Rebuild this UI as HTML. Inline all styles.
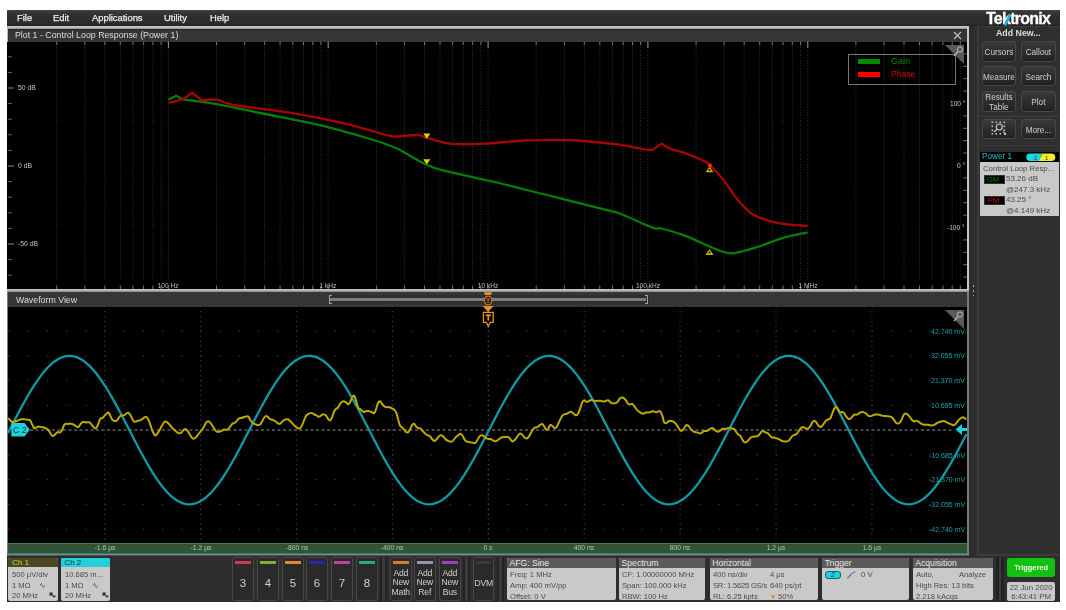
<!DOCTYPE html><html><head><meta charset="utf-8"><style>
*{margin:0;padding:0;box-sizing:border-box}
html,body{width:1066px;height:610px;overflow:hidden;background:#fff;font-family:"Liberation Sans", sans-serif}
.a{position:absolute}
.t{position:absolute;white-space:nowrap;line-height:1;will-change:transform}
.btn{position:absolute;border:1px solid #4a4642;border-radius:3px;background:linear-gradient(#3a3a3a,#2c2c2c 55%,#262626 85%,#1f1f1f);color:#cfcfcf;font-size:8.2px;text-align:center;display:flex;align-items:center;justify-content:center;line-height:1.17;padding-top:3.5px}
.cb{position:absolute;top:557px;width:22px;height:44px;border:1px solid #4a4642;border-radius:3px;background:#2a2a2a;color:#cfcfcf;text-align:center}
.cb i{position:absolute;left:2px;right:2px;top:3px;height:3px}
.badge{position:absolute;background:#c9c9c9;border-radius:2px;color:#4a4a4a;font-size:7.8px}
.bh{position:absolute;left:0;right:0;top:0;height:9px;background:#5a5a5a;color:#e0e0e0;font-size:8.4px;padding-left:2px;line-height:9px}
</style></head><body><div class="a" style="left:7px;top:10px;width:1053px;height:591.6px;background:#2e2e2e"></div><div class="a" style="left:7px;top:10px;width:1053px;height:16px;background:linear-gradient(#4a4a4a 0,#3a3a3a 1px,#2d2d2d 7px,#2b2b2b 14px,#222 16px)"></div><div class="t" style="left:17.4px;top:13px;font-size:9.4px;color:#ececec;-webkit-text-stroke:0.25px #ececec">File</div><div class="t" style="left:53.4px;top:13px;font-size:9.4px;color:#ececec;-webkit-text-stroke:0.25px #ececec">Edit</div><div class="t" style="left:91.7px;top:13px;font-size:9.4px;color:#ececec;-webkit-text-stroke:0.25px #ececec">Applications</div><div class="t" style="left:163.8px;top:13px;font-size:9.4px;color:#ececec;-webkit-text-stroke:0.25px #ececec">Utility</div><div class="t" style="left:210px;top:13px;font-size:9.4px;color:#ececec;-webkit-text-stroke:0.25px #ececec">Help</div><div class="a" style="left:7px;top:26px;width:962px;height:530px;background:#7a7a7a"></div><div class="a" style="left:7px;top:26px;width:962px;height:3px;background:linear-gradient(#d0d0d0,#9c9c9c)"></div><div class="a" style="left:8px;top:29px;width:959px;height:1px;background:#222"></div><div class="a" style="left:8px;top:30px;width:959px;height:11.6px;background:#363636"></div><div class="a" style="left:8px;top:41.6px;width:959px;height:247.4px;background:#000"></div><div class="t" style="left:15px;top:30.8px;font-size:8.8px;color:#dcdcdc">Plot 1 - Control Loop Response (Power 1)</div><svg class="a" style="left:953px;top:31px" width="9" height="9"><path d="M1 1 L8 8 M8 1 L1 8" stroke="#c4c4c4" stroke-width="1.1"/></svg><div class="a" style="left:967px;top:26px;width:2px;height:265px;background:#c6c6c6"></div><div class="a" style="left:7px;top:26px;width:1.3px;height:16px;background:#b8b8b8"></div><div class="a" style="left:7px;top:41.6px;width:1.3px;height:247.4px;background:#000"></div><div class="a" style="left:967px;top:291px;width:2px;height:264px;background:#7a7a7a"></div><div class="a" style="left:7px;top:291px;width:1px;height:264px;background:#7a7a7a"></div><div class="a" style="left:7px;top:289px;width:962px;height:3px;background:linear-gradient(#d0d0d0,#8a8a8a)"></div><div class="a" style="left:8px;top:292px;width:959px;height:14.5px;background:#363636"></div><div class="a" style="left:8px;top:306.5px;width:959px;height:236.5px;background:#000"></div><div class="a" style="left:8px;top:543px;width:959px;height:11px;background:linear-gradient(#384e2c,#30553a 50%,#2d5633);border-top:1px solid #2a8074;border-bottom:1px solid #2a7e7c"></div><div class="a" style="left:7px;top:554px;width:962px;height:2px;background:linear-gradient(#8e8484 50%,#525050 50%)"></div><div class="t" style="left:16px;top:295.8px;font-size:8.8px;color:#dcdcdc">Waveform View</div><div class="a" style="left:969px;top:26px;width:7px;height:530px;background:#2d2d2d"></div><div class="a" style="left:976.5px;top:26px;width:83.5px;height:529.5px;background:#2f2f2f;border-left:2.4px solid #3a3a3a;border-top:1px solid #3c3c3c;border-bottom:2px solid #3a3a3a"></div><div class="t" style="left:986px;top:11.2px;font-size:16px;font-weight:700;color:#fff;letter-spacing:-0.75px;-webkit-text-stroke:0.3px #fff">Tektronix</div><svg class="a" style="left:1001px;top:13.7px" width="12" height="12"><path d="M2.5 11.5 L5.6 11.5 L10.5 1 L7.4 1 Z" fill="#1ab4e0"/></svg><div class="t" style="left:995.5px;top:28.8px;font-size:8.8px;font-weight:700;color:#dcdcdc">Add New...</div><div class="btn" style="left:981.5px;top:41.0px;width:34.8px;height:20.6px">Cursors</div><div class="btn" style="left:1021px;top:41.0px;width:34.8px;height:20.6px">Callout</div><div class="btn" style="left:981.5px;top:65.5px;width:34.8px;height:20.6px">Measure</div><div class="btn" style="left:1021px;top:65.5px;width:34.8px;height:20.6px">Search</div><div class="btn" style="left:981.5px;top:91.0px;width:34.8px;height:20.6px">Results<br>Table</div><div class="btn" style="left:1021px;top:91.0px;width:34.8px;height:20.6px">Plot</div><div class="btn" style="left:981.5px;top:118.5px;width:34.8px;height:20.6px"></div><div class="btn" style="left:1021px;top:118.5px;width:34.8px;height:20.6px">More...</div><div class="a" style="left:979px;top:115.5px;width:80px;height:1px;background:#3e3e3e"></div><div class="a" style="left:979px;top:144.5px;width:80px;height:1px;background:#3e3e3e"></div><div class="a" style="left:979.5px;top:152px;width:79px;height:10px;background:#000"></div><div class="t" style="left:982px;top:153px;font-size:8.2px;color:#22c0d0">Power 1</div><svg class="a" style="left:1026px;top:152.5px" width="30" height="8.5"><path d="M4 0.5 H16.5 L12.5 8 H4 A3.75 3.75 0 0 1 4 0.5 Z" fill="#20d4e0"/><path d="M16.5 0.5 H25.5 A3.75 3.75 0 0 1 25.5 8 H12.5 Z" fill="#f0ec30"/><text x="8" y="7" font-size="6" fill="#0a4a50" font-family="Liberation Sans">2</text><text x="19" y="7" font-size="6" fill="#4a4a10" font-family="Liberation Sans">1</text></svg><div class="a" style="left:979.5px;top:162px;width:79px;height:54px;background:#c9c9c9"></div><div class="t" style="left:983px;top:165px;font-size:7.75px;color:#4a4a4a">Control Loop Resp...</div><div class="a" style="left:983.5px;top:175px;width:21px;height:9px;background:#000;border:1px solid #333"></div><div class="t" style="left:987px;top:175.5px;font-size:7.5px;color:#0a7a0a">GM</div><div class="t" style="left:1006px;top:175px;font-size:8px;color:#4a4a4a">53.26 dB</div><div class="t" style="left:1006px;top:185.5px;font-size:8px;color:#4a4a4a">@247.3 kHz</div><div class="a" style="left:983.5px;top:196px;width:21px;height:9px;background:#000;border:1px solid #333"></div><div class="t" style="left:988px;top:196.5px;font-size:7.5px;color:#d01010">PM</div><div class="t" style="left:1006px;top:196px;font-size:8px;color:#4a4a4a">43.25 °</div><div class="t" style="left:1006px;top:206.5px;font-size:8px;color:#4a4a4a">@4.149 kHz</div><svg class="a" style="left:0;top:0" width="1066" height="610" viewBox="0 0 1066 610"><line x1="56.7" y1="42" x2="56.7" y2="281" stroke="#313131" stroke-width="1" stroke-dasharray="1 1.6"/><line x1="56.7" y1="41.6" x2="56.7" y2="45" stroke="#707070" stroke-width="1"/><line x1="56.7" y1="285.5" x2="56.7" y2="289" stroke="#777" stroke-width="1"/><line x1="84.8" y1="42" x2="84.8" y2="281" stroke="#313131" stroke-width="1" stroke-dasharray="1 1.6"/><line x1="84.8" y1="41.6" x2="84.8" y2="45" stroke="#707070" stroke-width="1"/><line x1="84.8" y1="285.5" x2="84.8" y2="289" stroke="#777" stroke-width="1"/><line x1="104.8" y1="42" x2="104.8" y2="281" stroke="#313131" stroke-width="1" stroke-dasharray="1 1.6"/><line x1="104.8" y1="41.6" x2="104.8" y2="45" stroke="#707070" stroke-width="1"/><line x1="104.8" y1="285.5" x2="104.8" y2="289" stroke="#777" stroke-width="1"/><line x1="120.3" y1="42" x2="120.3" y2="281" stroke="#313131" stroke-width="1" stroke-dasharray="1 1.6"/><line x1="120.3" y1="41.6" x2="120.3" y2="45" stroke="#707070" stroke-width="1"/><line x1="120.3" y1="285.5" x2="120.3" y2="289" stroke="#777" stroke-width="1"/><line x1="132.9" y1="42" x2="132.9" y2="281" stroke="#313131" stroke-width="1" stroke-dasharray="1 1.6"/><line x1="132.9" y1="41.6" x2="132.9" y2="45" stroke="#707070" stroke-width="1"/><line x1="132.9" y1="285.5" x2="132.9" y2="289" stroke="#777" stroke-width="1"/><line x1="143.6" y1="42" x2="143.6" y2="281" stroke="#313131" stroke-width="1" stroke-dasharray="1 1.6"/><line x1="143.6" y1="41.6" x2="143.6" y2="45" stroke="#707070" stroke-width="1"/><line x1="143.6" y1="285.5" x2="143.6" y2="289" stroke="#777" stroke-width="1"/><line x1="152.9" y1="42" x2="152.9" y2="281" stroke="#313131" stroke-width="1" stroke-dasharray="1 1.6"/><line x1="152.9" y1="41.6" x2="152.9" y2="45" stroke="#707070" stroke-width="1"/><line x1="152.9" y1="285.5" x2="152.9" y2="289" stroke="#777" stroke-width="1"/><line x1="161.1" y1="42" x2="161.1" y2="281" stroke="#313131" stroke-width="1" stroke-dasharray="1 1.6"/><line x1="161.1" y1="41.6" x2="161.1" y2="45" stroke="#707070" stroke-width="1"/><line x1="161.1" y1="285.5" x2="161.1" y2="289" stroke="#777" stroke-width="1"/><line x1="168.4" y1="42" x2="168.4" y2="281" stroke="#313131" stroke-width="1" stroke-dasharray="1 1.6"/><line x1="168.4" y1="41.6" x2="168.4" y2="48" stroke="#999" stroke-width="1"/><line x1="168.4" y1="285.5" x2="168.4" y2="289" stroke="#777" stroke-width="1"/><line x1="216.5" y1="42" x2="216.5" y2="281" stroke="#313131" stroke-width="1" stroke-dasharray="1 1.6"/><line x1="216.5" y1="41.6" x2="216.5" y2="45" stroke="#707070" stroke-width="1"/><line x1="216.5" y1="285.5" x2="216.5" y2="289" stroke="#777" stroke-width="1"/><line x1="244.7" y1="42" x2="244.7" y2="281" stroke="#313131" stroke-width="1" stroke-dasharray="1 1.6"/><line x1="244.7" y1="41.6" x2="244.7" y2="45" stroke="#707070" stroke-width="1"/><line x1="244.7" y1="285.5" x2="244.7" y2="289" stroke="#777" stroke-width="1"/><line x1="264.6" y1="42" x2="264.6" y2="281" stroke="#313131" stroke-width="1" stroke-dasharray="1 1.6"/><line x1="264.6" y1="41.6" x2="264.6" y2="45" stroke="#707070" stroke-width="1"/><line x1="264.6" y1="285.5" x2="264.6" y2="289" stroke="#777" stroke-width="1"/><line x1="280.1" y1="42" x2="280.1" y2="281" stroke="#313131" stroke-width="1" stroke-dasharray="1 1.6"/><line x1="280.1" y1="41.6" x2="280.1" y2="45" stroke="#707070" stroke-width="1"/><line x1="280.1" y1="285.5" x2="280.1" y2="289" stroke="#777" stroke-width="1"/><line x1="292.8" y1="42" x2="292.8" y2="281" stroke="#313131" stroke-width="1" stroke-dasharray="1 1.6"/><line x1="292.8" y1="41.6" x2="292.8" y2="45" stroke="#707070" stroke-width="1"/><line x1="292.8" y1="285.5" x2="292.8" y2="289" stroke="#777" stroke-width="1"/><line x1="303.5" y1="42" x2="303.5" y2="281" stroke="#313131" stroke-width="1" stroke-dasharray="1 1.6"/><line x1="303.5" y1="41.6" x2="303.5" y2="45" stroke="#707070" stroke-width="1"/><line x1="303.5" y1="285.5" x2="303.5" y2="289" stroke="#777" stroke-width="1"/><line x1="312.8" y1="42" x2="312.8" y2="281" stroke="#313131" stroke-width="1" stroke-dasharray="1 1.6"/><line x1="312.8" y1="41.6" x2="312.8" y2="45" stroke="#707070" stroke-width="1"/><line x1="312.8" y1="285.5" x2="312.8" y2="289" stroke="#777" stroke-width="1"/><line x1="320.9" y1="42" x2="320.9" y2="281" stroke="#313131" stroke-width="1" stroke-dasharray="1 1.6"/><line x1="320.9" y1="41.6" x2="320.9" y2="45" stroke="#707070" stroke-width="1"/><line x1="320.9" y1="285.5" x2="320.9" y2="289" stroke="#777" stroke-width="1"/><line x1="328.2" y1="42" x2="328.2" y2="281" stroke="#313131" stroke-width="1" stroke-dasharray="1 1.6"/><line x1="328.2" y1="41.6" x2="328.2" y2="48" stroke="#999" stroke-width="1"/><line x1="328.2" y1="285.5" x2="328.2" y2="289" stroke="#777" stroke-width="1"/><line x1="376.4" y1="42" x2="376.4" y2="281" stroke="#313131" stroke-width="1" stroke-dasharray="1 1.6"/><line x1="376.4" y1="41.6" x2="376.4" y2="45" stroke="#707070" stroke-width="1"/><line x1="376.4" y1="285.5" x2="376.4" y2="289" stroke="#777" stroke-width="1"/><line x1="404.5" y1="42" x2="404.5" y2="281" stroke="#313131" stroke-width="1" stroke-dasharray="1 1.6"/><line x1="404.5" y1="41.6" x2="404.5" y2="45" stroke="#707070" stroke-width="1"/><line x1="404.5" y1="285.5" x2="404.5" y2="289" stroke="#777" stroke-width="1"/><line x1="424.5" y1="42" x2="424.5" y2="281" stroke="#313131" stroke-width="1" stroke-dasharray="1 1.6"/><line x1="424.5" y1="41.6" x2="424.5" y2="45" stroke="#707070" stroke-width="1"/><line x1="424.5" y1="285.5" x2="424.5" y2="289" stroke="#777" stroke-width="1"/><line x1="440.0" y1="42" x2="440.0" y2="281" stroke="#313131" stroke-width="1" stroke-dasharray="1 1.6"/><line x1="440.0" y1="41.6" x2="440.0" y2="45" stroke="#707070" stroke-width="1"/><line x1="440.0" y1="285.5" x2="440.0" y2="289" stroke="#777" stroke-width="1"/><line x1="452.6" y1="42" x2="452.6" y2="281" stroke="#313131" stroke-width="1" stroke-dasharray="1 1.6"/><line x1="452.6" y1="41.6" x2="452.6" y2="45" stroke="#707070" stroke-width="1"/><line x1="452.6" y1="285.5" x2="452.6" y2="289" stroke="#777" stroke-width="1"/><line x1="463.3" y1="42" x2="463.3" y2="281" stroke="#313131" stroke-width="1" stroke-dasharray="1 1.6"/><line x1="463.3" y1="41.6" x2="463.3" y2="45" stroke="#707070" stroke-width="1"/><line x1="463.3" y1="285.5" x2="463.3" y2="289" stroke="#777" stroke-width="1"/><line x1="472.6" y1="42" x2="472.6" y2="281" stroke="#313131" stroke-width="1" stroke-dasharray="1 1.6"/><line x1="472.6" y1="41.6" x2="472.6" y2="45" stroke="#707070" stroke-width="1"/><line x1="472.6" y1="285.5" x2="472.6" y2="289" stroke="#777" stroke-width="1"/><line x1="480.8" y1="42" x2="480.8" y2="281" stroke="#313131" stroke-width="1" stroke-dasharray="1 1.6"/><line x1="480.8" y1="41.6" x2="480.8" y2="45" stroke="#707070" stroke-width="1"/><line x1="480.8" y1="285.5" x2="480.8" y2="289" stroke="#777" stroke-width="1"/><line x1="488.1" y1="42" x2="488.1" y2="281" stroke="#313131" stroke-width="1" stroke-dasharray="1 1.6"/><line x1="488.1" y1="41.6" x2="488.1" y2="48" stroke="#999" stroke-width="1"/><line x1="488.1" y1="285.5" x2="488.1" y2="289" stroke="#777" stroke-width="1"/><line x1="536.2" y1="42" x2="536.2" y2="281" stroke="#313131" stroke-width="1" stroke-dasharray="1 1.6"/><line x1="536.2" y1="41.6" x2="536.2" y2="45" stroke="#707070" stroke-width="1"/><line x1="536.2" y1="285.5" x2="536.2" y2="289" stroke="#777" stroke-width="1"/><line x1="564.4" y1="42" x2="564.4" y2="281" stroke="#313131" stroke-width="1" stroke-dasharray="1 1.6"/><line x1="564.4" y1="41.6" x2="564.4" y2="45" stroke="#707070" stroke-width="1"/><line x1="564.4" y1="285.5" x2="564.4" y2="289" stroke="#777" stroke-width="1"/><line x1="584.3" y1="42" x2="584.3" y2="281" stroke="#313131" stroke-width="1" stroke-dasharray="1 1.6"/><line x1="584.3" y1="41.6" x2="584.3" y2="45" stroke="#707070" stroke-width="1"/><line x1="584.3" y1="285.5" x2="584.3" y2="289" stroke="#777" stroke-width="1"/><line x1="599.8" y1="42" x2="599.8" y2="281" stroke="#313131" stroke-width="1" stroke-dasharray="1 1.6"/><line x1="599.8" y1="41.6" x2="599.8" y2="45" stroke="#707070" stroke-width="1"/><line x1="599.8" y1="285.5" x2="599.8" y2="289" stroke="#777" stroke-width="1"/><line x1="612.5" y1="42" x2="612.5" y2="281" stroke="#313131" stroke-width="1" stroke-dasharray="1 1.6"/><line x1="612.5" y1="41.6" x2="612.5" y2="45" stroke="#707070" stroke-width="1"/><line x1="612.5" y1="285.5" x2="612.5" y2="289" stroke="#777" stroke-width="1"/><line x1="623.2" y1="42" x2="623.2" y2="281" stroke="#313131" stroke-width="1" stroke-dasharray="1 1.6"/><line x1="623.2" y1="41.6" x2="623.2" y2="45" stroke="#707070" stroke-width="1"/><line x1="623.2" y1="285.5" x2="623.2" y2="289" stroke="#777" stroke-width="1"/><line x1="632.5" y1="42" x2="632.5" y2="281" stroke="#313131" stroke-width="1" stroke-dasharray="1 1.6"/><line x1="632.5" y1="41.6" x2="632.5" y2="45" stroke="#707070" stroke-width="1"/><line x1="632.5" y1="285.5" x2="632.5" y2="289" stroke="#777" stroke-width="1"/><line x1="640.6" y1="42" x2="640.6" y2="281" stroke="#313131" stroke-width="1" stroke-dasharray="1 1.6"/><line x1="640.6" y1="41.6" x2="640.6" y2="45" stroke="#707070" stroke-width="1"/><line x1="640.6" y1="285.5" x2="640.6" y2="289" stroke="#777" stroke-width="1"/><line x1="647.9" y1="42" x2="647.9" y2="281" stroke="#313131" stroke-width="1" stroke-dasharray="1 1.6"/><line x1="647.9" y1="41.6" x2="647.9" y2="48" stroke="#999" stroke-width="1"/><line x1="647.9" y1="285.5" x2="647.9" y2="289" stroke="#777" stroke-width="1"/><line x1="696.1" y1="42" x2="696.1" y2="281" stroke="#313131" stroke-width="1" stroke-dasharray="1 1.6"/><line x1="696.1" y1="41.6" x2="696.1" y2="45" stroke="#707070" stroke-width="1"/><line x1="696.1" y1="285.5" x2="696.1" y2="289" stroke="#777" stroke-width="1"/><line x1="724.2" y1="42" x2="724.2" y2="281" stroke="#313131" stroke-width="1" stroke-dasharray="1 1.6"/><line x1="724.2" y1="41.6" x2="724.2" y2="45" stroke="#707070" stroke-width="1"/><line x1="724.2" y1="285.5" x2="724.2" y2="289" stroke="#777" stroke-width="1"/><line x1="744.2" y1="42" x2="744.2" y2="281" stroke="#313131" stroke-width="1" stroke-dasharray="1 1.6"/><line x1="744.2" y1="41.6" x2="744.2" y2="45" stroke="#707070" stroke-width="1"/><line x1="744.2" y1="285.5" x2="744.2" y2="289" stroke="#777" stroke-width="1"/><line x1="759.7" y1="42" x2="759.7" y2="281" stroke="#313131" stroke-width="1" stroke-dasharray="1 1.6"/><line x1="759.7" y1="41.6" x2="759.7" y2="45" stroke="#707070" stroke-width="1"/><line x1="759.7" y1="285.5" x2="759.7" y2="289" stroke="#777" stroke-width="1"/><line x1="772.3" y1="42" x2="772.3" y2="281" stroke="#313131" stroke-width="1" stroke-dasharray="1 1.6"/><line x1="772.3" y1="41.6" x2="772.3" y2="45" stroke="#707070" stroke-width="1"/><line x1="772.3" y1="285.5" x2="772.3" y2="289" stroke="#777" stroke-width="1"/><line x1="783.0" y1="42" x2="783.0" y2="281" stroke="#313131" stroke-width="1" stroke-dasharray="1 1.6"/><line x1="783.0" y1="41.6" x2="783.0" y2="45" stroke="#707070" stroke-width="1"/><line x1="783.0" y1="285.5" x2="783.0" y2="289" stroke="#777" stroke-width="1"/><line x1="792.3" y1="42" x2="792.3" y2="281" stroke="#313131" stroke-width="1" stroke-dasharray="1 1.6"/><line x1="792.3" y1="41.6" x2="792.3" y2="45" stroke="#707070" stroke-width="1"/><line x1="792.3" y1="285.5" x2="792.3" y2="289" stroke="#777" stroke-width="1"/><line x1="800.5" y1="42" x2="800.5" y2="281" stroke="#313131" stroke-width="1" stroke-dasharray="1 1.6"/><line x1="800.5" y1="41.6" x2="800.5" y2="45" stroke="#707070" stroke-width="1"/><line x1="800.5" y1="285.5" x2="800.5" y2="289" stroke="#777" stroke-width="1"/><line x1="807.8" y1="42" x2="807.8" y2="281" stroke="#313131" stroke-width="1" stroke-dasharray="1 1.6"/><line x1="807.8" y1="41.6" x2="807.8" y2="48" stroke="#999" stroke-width="1"/><line x1="807.8" y1="285.5" x2="807.8" y2="289" stroke="#777" stroke-width="1"/><line x1="855.9" y1="42" x2="855.9" y2="281" stroke="#313131" stroke-width="1" stroke-dasharray="1 1.6"/><line x1="855.9" y1="41.6" x2="855.9" y2="45" stroke="#707070" stroke-width="1"/><line x1="855.9" y1="285.5" x2="855.9" y2="289" stroke="#777" stroke-width="1"/><line x1="884.1" y1="42" x2="884.1" y2="281" stroke="#313131" stroke-width="1" stroke-dasharray="1 1.6"/><line x1="884.1" y1="41.6" x2="884.1" y2="45" stroke="#707070" stroke-width="1"/><line x1="884.1" y1="285.5" x2="884.1" y2="289" stroke="#777" stroke-width="1"/><line x1="904.0" y1="42" x2="904.0" y2="281" stroke="#313131" stroke-width="1" stroke-dasharray="1 1.6"/><line x1="904.0" y1="41.6" x2="904.0" y2="45" stroke="#707070" stroke-width="1"/><line x1="904.0" y1="285.5" x2="904.0" y2="289" stroke="#777" stroke-width="1"/><line x1="919.5" y1="42" x2="919.5" y2="281" stroke="#313131" stroke-width="1" stroke-dasharray="1 1.6"/><line x1="919.5" y1="41.6" x2="919.5" y2="45" stroke="#707070" stroke-width="1"/><line x1="919.5" y1="285.5" x2="919.5" y2="289" stroke="#777" stroke-width="1"/><line x1="932.2" y1="42" x2="932.2" y2="281" stroke="#313131" stroke-width="1" stroke-dasharray="1 1.6"/><line x1="932.2" y1="41.6" x2="932.2" y2="45" stroke="#707070" stroke-width="1"/><line x1="932.2" y1="285.5" x2="932.2" y2="289" stroke="#777" stroke-width="1"/><line x1="942.9" y1="42" x2="942.9" y2="281" stroke="#313131" stroke-width="1" stroke-dasharray="1 1.6"/><line x1="942.9" y1="41.6" x2="942.9" y2="45" stroke="#707070" stroke-width="1"/><line x1="942.9" y1="285.5" x2="942.9" y2="289" stroke="#777" stroke-width="1"/><line x1="952.2" y1="42" x2="952.2" y2="281" stroke="#313131" stroke-width="1" stroke-dasharray="1 1.6"/><line x1="952.2" y1="41.6" x2="952.2" y2="45" stroke="#707070" stroke-width="1"/><line x1="952.2" y1="285.5" x2="952.2" y2="289" stroke="#777" stroke-width="1"/><line x1="960.3" y1="42" x2="960.3" y2="281" stroke="#313131" stroke-width="1" stroke-dasharray="1 1.6"/><line x1="960.3" y1="41.6" x2="960.3" y2="45" stroke="#707070" stroke-width="1"/><line x1="960.3" y1="285.5" x2="960.3" y2="289" stroke="#777" stroke-width="1"/><line x1="8" y1="56.8" x2="12" y2="56.8" stroke="#666" stroke-width="1"/><line x1="8" y1="72.4" x2="12" y2="72.4" stroke="#666" stroke-width="1"/><line x1="8" y1="88.0" x2="14" y2="88.0" stroke="#888" stroke-width="1"/><line x1="8" y1="103.6" x2="12" y2="103.6" stroke="#666" stroke-width="1"/><line x1="8" y1="119.2" x2="12" y2="119.2" stroke="#666" stroke-width="1"/><line x1="8" y1="134.8" x2="12" y2="134.8" stroke="#666" stroke-width="1"/><line x1="8" y1="150.4" x2="12" y2="150.4" stroke="#666" stroke-width="1"/><line x1="8" y1="166.0" x2="14" y2="166.0" stroke="#888" stroke-width="1"/><line x1="8" y1="181.6" x2="12" y2="181.6" stroke="#666" stroke-width="1"/><line x1="8" y1="197.2" x2="12" y2="197.2" stroke="#666" stroke-width="1"/><line x1="8" y1="212.8" x2="12" y2="212.8" stroke="#666" stroke-width="1"/><line x1="8" y1="228.4" x2="12" y2="228.4" stroke="#666" stroke-width="1"/><line x1="8" y1="244.0" x2="14" y2="244.0" stroke="#888" stroke-width="1"/><line x1="8" y1="259.6" x2="12" y2="259.6" stroke="#666" stroke-width="1"/><line x1="8" y1="275.2" x2="12" y2="275.2" stroke="#666" stroke-width="1"/><line x1="963" y1="53.9" x2="967" y2="53.9" stroke="#666" stroke-width="1"/><line x1="963" y1="66.3" x2="967" y2="66.3" stroke="#666" stroke-width="1"/><line x1="963" y1="78.7" x2="967" y2="78.7" stroke="#666" stroke-width="1"/><line x1="963" y1="91.1" x2="967" y2="91.1" stroke="#666" stroke-width="1"/><line x1="963" y1="115.9" x2="967" y2="115.9" stroke="#666" stroke-width="1"/><line x1="963" y1="128.3" x2="967" y2="128.3" stroke="#666" stroke-width="1"/><line x1="963" y1="140.7" x2="967" y2="140.7" stroke="#666" stroke-width="1"/><line x1="963" y1="153.1" x2="967" y2="153.1" stroke="#666" stroke-width="1"/><line x1="963" y1="177.9" x2="967" y2="177.9" stroke="#666" stroke-width="1"/><line x1="963" y1="190.3" x2="967" y2="190.3" stroke="#666" stroke-width="1"/><line x1="963" y1="202.7" x2="967" y2="202.7" stroke="#666" stroke-width="1"/><line x1="963" y1="215.1" x2="967" y2="215.1" stroke="#666" stroke-width="1"/><line x1="963" y1="239.9" x2="967" y2="239.9" stroke="#666" stroke-width="1"/><line x1="963" y1="252.3" x2="967" y2="252.3" stroke="#666" stroke-width="1"/><line x1="963" y1="264.7" x2="967" y2="264.7" stroke="#666" stroke-width="1"/><line x1="963" y1="277.1" x2="967" y2="277.1" stroke="#666" stroke-width="1"/><path d="M168.4,99.7 C168.4,99.7 176.3,95.8 176.3,95.8 C176.3,95.8 183.6,99.7 183.6,99.7 C183.6,99.7 202.9,101.8 216.5,104.2 C230.1,106.6 248.2,110.6 265.0,114.0 C281.9,117.4 300.1,120.5 317.6,124.7 C335.1,128.9 356.9,135.1 370.0,139.0 C383.1,142.9 387.1,144.1 396.4,148.3 C405.7,152.6 417.5,160.7 425.8,164.5 C434.1,168.3 434.1,168.1 446.3,171.2 C458.5,174.3 481.3,178.8 498.8,183.0 C516.3,187.2 533.8,191.8 551.3,196.2 C568.8,200.6 592.3,206.3 603.9,209.3 C615.5,212.3 612.9,210.9 621.0,214.0 C629.1,217.1 645.7,225.3 652.5,227.7 C659.3,230.1 656.0,227.1 661.7,228.5 C667.4,229.9 678.6,233.3 686.7,236.4 C694.8,239.5 703.8,244.2 710.3,246.9 C716.8,249.6 721.6,251.7 726.0,252.7 C730.4,253.7 731.3,253.7 736.6,252.7 C741.9,251.7 749.7,249.4 757.6,246.9 C765.5,244.4 775.6,240.1 783.9,237.7 C792.2,235.3 803.6,233.3 807.5,232.4" fill="none" stroke="#067e06" stroke-width="2.3" stroke-linejoin="round"/><path d="M168.4,103.0 C170.9,102.3 183.6,99.0 183.6,99.0 C183.6,99.0 192.0,92.6 192.0,92.6 C192.0,92.6 202.0,100.5 202.0,100.5 C202.0,100.5 211.2,99.0 216.5,99.7 C221.8,100.5 221.1,102.8 233.5,105.0 C245.9,107.2 272.6,109.8 291.0,112.8 C309.4,115.8 328.2,119.6 344.0,123.3 C359.8,127.0 377.3,132.8 386.0,135.0 C394.7,137.2 391.2,136.5 396.4,136.5 C401.6,136.5 412.4,134.8 417.4,135.0 C422.4,135.2 421.8,136.6 426.6,137.9 C431.4,139.2 440.8,142.1 446.3,143.1 C451.8,144.1 452.8,144.1 459.4,144.2 C466.0,144.3 474.8,144.2 485.7,143.6 C496.6,143.0 511.9,141.1 525.0,140.5 C538.1,139.9 555.7,140.2 564.5,140.2 C573.3,140.2 568.9,139.8 577.6,140.5 C586.4,141.2 605.4,142.9 617.0,144.4 C628.6,145.9 641.2,148.9 647.3,149.7 C653.4,150.4 653.8,148.9 653.8,148.9 C653.8,148.9 661.7,143.7 661.7,143.7 C661.7,143.7 666.8,147.2 671.0,148.9 C675.2,150.6 681.0,151.5 686.7,153.6 C692.4,155.7 701.1,159.5 705.0,161.5 C708.9,163.5 707.2,162.4 710.3,165.5 C713.4,168.6 719.1,174.5 723.5,180.0 C727.9,185.5 731.8,192.6 736.6,198.3 C741.4,204.0 746.6,210.2 752.3,214.0 C758.0,217.8 764.6,219.6 770.7,221.4 C776.8,223.2 782.9,223.8 789.0,224.6 C795.1,225.3 804.4,225.7 807.5,225.9" fill="none" stroke="#a60505" stroke-width="2.3" stroke-linejoin="round"/><path d="M423.3 133.5 H430.3 L426.8 138.8 Z" fill="#e8d400"/><path d="M423.3 159.2 H430.3 L426.8 164.5 Z" fill="#e8d400"/><circle cx="710" cy="165.5" r="2" fill="#ff3010"/><path d="M709.5 166.8 L713.5 172.3 H705.5 Z" fill="#c8b400"/><circle cx="709.5" cy="170" r="1" fill="#000"/><path d="M709.5 249 L713.5 255 H705.5 Z" fill="#c8b400"/><circle cx="709.5" cy="252.5" r="1" fill="#000"/><line x1="104.7" y1="306" x2="104.7" y2="543" stroke="#3a3a3a" stroke-width="1.2" stroke-dasharray="1.2 3.74"/><line x1="200.6" y1="306" x2="200.6" y2="543" stroke="#3a3a3a" stroke-width="1.2" stroke-dasharray="1.2 3.74"/><line x1="296.5" y1="306" x2="296.5" y2="543" stroke="#3a3a3a" stroke-width="1.2" stroke-dasharray="1.2 3.74"/><line x1="392.4" y1="306" x2="392.4" y2="543" stroke="#3a3a3a" stroke-width="1.2" stroke-dasharray="1.2 3.74"/><line x1="488.3" y1="306" x2="488.3" y2="543" stroke="#5a5a5a" stroke-width="1.2" stroke-dasharray="1.2 3.74"/><line x1="584.2" y1="306" x2="584.2" y2="543" stroke="#3a3a3a" stroke-width="1.2" stroke-dasharray="1.2 3.74"/><line x1="680.1" y1="306" x2="680.1" y2="543" stroke="#3a3a3a" stroke-width="1.2" stroke-dasharray="1.2 3.74"/><line x1="776.0" y1="306" x2="776.0" y2="543" stroke="#3a3a3a" stroke-width="1.2" stroke-dasharray="1.2 3.74"/><line x1="871.9" y1="306" x2="871.9" y2="543" stroke="#3a3a3a" stroke-width="1.2" stroke-dasharray="1.2 3.74"/><line x1="8" y1="306.1" x2="967" y2="306.1" stroke="#3c3c3c" stroke-width="1.2" stroke-dasharray="1.2 17.98" stroke-dashoffset="-0.6"/><line x1="8" y1="330.9" x2="967" y2="330.9" stroke="#3c3c3c" stroke-width="1.2" stroke-dasharray="1.2 17.98" stroke-dashoffset="-0.6"/><line x1="8" y1="355.7" x2="967" y2="355.7" stroke="#3c3c3c" stroke-width="1.2" stroke-dasharray="1.2 17.98" stroke-dashoffset="-0.6"/><line x1="8" y1="380.5" x2="967" y2="380.5" stroke="#3c3c3c" stroke-width="1.2" stroke-dasharray="1.2 17.98" stroke-dashoffset="-0.6"/><line x1="8" y1="405.3" x2="967" y2="405.3" stroke="#3c3c3c" stroke-width="1.2" stroke-dasharray="1.2 17.98" stroke-dashoffset="-0.6"/><line x1="8" y1="454.9" x2="967" y2="454.9" stroke="#3c3c3c" stroke-width="1.2" stroke-dasharray="1.2 17.98" stroke-dashoffset="-0.6"/><line x1="8" y1="479.7" x2="967" y2="479.7" stroke="#3c3c3c" stroke-width="1.2" stroke-dasharray="1.2 17.98" stroke-dashoffset="-0.6"/><line x1="8" y1="504.5" x2="967" y2="504.5" stroke="#3c3c3c" stroke-width="1.2" stroke-dasharray="1.2 17.98" stroke-dashoffset="-0.6"/><line x1="8" y1="529.3" x2="967" y2="529.3" stroke="#3c3c3c" stroke-width="1.2" stroke-dasharray="1.2 17.98" stroke-dashoffset="-0.6"/><line x1="30" y1="430.1" x2="953" y2="430.1" stroke="#474747" stroke-width="2" stroke-dasharray="3 2.5"/><polyline points="8.0,433.0 9.5,430.1 11.0,427.2 12.5,424.3 14.0,421.4 15.5,418.5 17.0,415.6 18.5,412.8 20.0,409.9 21.5,407.1 23.0,404.4 24.5,401.7 26.0,399.0 27.5,396.4 29.0,393.8 30.5,391.3 32.0,388.8 33.5,386.4 35.0,384.1 36.5,381.9 38.0,379.7 39.5,377.6 41.0,375.6 42.5,373.6 44.0,371.8 45.5,370.0 47.0,368.4 48.5,366.8 50.0,365.3 51.5,363.9 53.0,362.7 54.5,361.5 56.0,360.5 57.5,359.5 59.0,358.7 60.5,357.9 62.0,357.3 63.5,356.8 65.0,356.4 66.5,356.1 68.0,356.0 69.5,355.9 71.0,356.0 72.5,356.1 74.0,356.4 75.5,356.8 77.0,357.4 78.5,358.0 80.0,358.7 81.5,359.6 83.0,360.5 84.5,361.6 86.0,362.8 87.5,364.1 89.0,365.4 90.5,366.9 92.0,368.5 93.5,370.2 95.0,371.9 96.5,373.8 98.0,375.7 99.5,377.8 101.0,379.9 102.5,382.1 104.0,384.3 105.5,386.6 107.0,389.0 108.5,391.5 110.0,394.0 111.5,396.6 113.0,399.2 114.5,401.9 116.0,404.6 117.5,407.4 119.0,410.2 120.5,413.0 122.0,415.8 123.5,418.7 125.0,421.6 126.5,424.5 128.0,427.4 129.5,430.3 131.0,433.3 132.5,436.2 134.0,439.1 135.5,442.0 137.0,444.8 138.5,447.7 140.0,450.5 141.5,453.3 143.0,456.0 144.5,458.7 146.0,461.4 147.5,464.0 149.0,466.6 150.5,469.1 152.0,471.6 153.5,473.9 155.0,476.3 156.5,478.5 158.0,480.7 159.5,482.8 161.0,484.8 162.5,486.7 164.0,488.6 165.5,490.3 167.0,492.0 168.5,493.5 170.0,495.0 171.5,496.4 173.0,497.6 174.5,498.8 176.0,499.8 177.5,500.8 179.0,501.6 180.5,502.3 182.0,502.9 183.5,503.4 185.0,503.8 186.5,504.1 188.0,504.3 189.5,504.3 191.0,504.2 192.5,504.0 194.0,503.7 195.5,503.3 197.0,502.8 198.5,502.2 200.0,501.4 201.5,500.5 203.0,499.6 204.5,498.5 206.0,497.3 207.5,496.0 209.0,494.6 210.5,493.2 212.0,491.6 213.5,489.9 215.0,488.1 216.5,486.2 218.0,484.3 219.5,482.3 221.0,480.2 222.5,478.0 224.0,475.7 225.5,473.4 227.0,471.0 228.5,468.5 230.0,466.0 231.5,463.4 233.0,460.8 234.5,458.1 236.0,455.4 237.5,452.6 239.0,449.8 240.5,447.0 242.0,444.1 243.5,441.2 245.0,438.3 246.5,435.4 248.0,432.5 249.5,429.6 251.0,426.7 252.5,423.8 254.0,420.9 255.5,418.0 257.0,415.1 258.5,412.3 260.0,409.5 261.5,406.7 263.0,403.9 264.5,401.2 266.0,398.6 267.5,395.9 269.0,393.4 270.5,390.9 272.0,388.4 273.5,386.1 275.0,383.7 276.5,381.5 278.0,379.3 279.5,377.2 281.0,375.2 282.5,373.3 284.0,371.5 285.5,369.7 287.0,368.1 288.5,366.5 290.0,365.1 291.5,363.7 293.0,362.5 294.5,361.3 296.0,360.3 297.5,359.4 299.0,358.5 300.5,357.8 302.0,357.2 303.5,356.7 305.0,356.3 306.5,356.1 308.0,355.9 309.5,355.9 311.0,356.0 312.5,356.2 314.0,356.5 315.5,356.9 317.0,357.4 318.5,358.1 320.0,358.9 321.5,359.7 323.0,360.7 324.5,361.8 326.0,363.0 327.5,364.3 329.0,365.7 330.5,367.2 332.0,368.8 333.5,370.5 335.0,372.2 336.5,374.1 338.0,376.1 339.5,378.1 341.0,380.2 342.5,382.4 344.0,384.7 345.5,387.0 347.0,389.4 348.5,391.9 350.0,394.4 351.5,397.0 353.0,399.7 354.5,402.4 356.0,405.1 357.5,407.8 359.0,410.6 360.5,413.5 362.0,416.3 363.5,419.2 365.0,422.1 366.5,425.0 368.0,427.9 369.5,430.8 371.0,433.7 372.5,436.7 374.0,439.6 375.5,442.4 377.0,445.3 378.5,448.1 380.0,451.0 381.5,453.7 383.0,456.5 384.5,459.2 386.0,461.9 387.5,464.5 389.0,467.0 390.5,469.5 392.0,472.0 393.5,474.3 395.0,476.6 396.5,478.9 398.0,481.0 399.5,483.1 401.0,485.1 402.5,487.0 404.0,488.9 405.5,490.6 407.0,492.2 408.5,493.8 410.0,495.2 411.5,496.6 413.0,497.8 414.5,499.0 416.0,500.0 417.5,500.9 419.0,501.7 420.5,502.4 422.0,503.0 423.5,503.5 425.0,503.9 426.5,504.1 428.0,504.3 429.5,504.3 431.0,504.2 432.5,504.0 434.0,503.7 435.5,503.2 437.0,502.7 438.5,502.0 440.0,501.3 441.5,500.4 443.0,499.4 444.5,498.3 446.0,497.1 447.5,495.8 449.0,494.4 450.5,492.9 452.0,491.3 453.5,489.6 455.0,487.8 456.5,485.9 458.0,484.0 459.5,481.9 461.0,479.8 462.5,477.6 464.0,475.3 465.5,473.0 467.0,470.5 468.5,468.1 470.0,465.5 471.5,462.9 473.0,460.3 474.5,457.6 476.0,454.9 477.5,452.1 479.0,449.3 480.5,446.5 482.0,443.6 483.5,440.8 485.0,437.9 486.5,435.0 488.0,432.0 489.5,429.1 491.0,426.2 492.5,423.3 494.0,420.4 495.5,417.5 497.0,414.7 498.5,411.8 500.0,409.0 501.5,406.2 503.0,403.5 504.5,400.8 506.0,398.1 507.5,395.5 509.0,393.0 510.5,390.5 512.0,388.0 513.5,385.7 515.0,383.4 516.5,381.1 518.0,379.0 519.5,376.9 521.0,374.9 522.5,373.0 524.0,371.2 525.5,369.5 527.0,367.8 528.5,366.3 530.0,364.9 531.5,363.5 533.0,362.3 534.5,361.1 536.0,360.1 537.5,359.2 539.0,358.4 540.5,357.7 542.0,357.1 543.5,356.7 545.0,356.3 546.5,356.1 548.0,355.9 549.5,355.9 551.0,356.0 552.5,356.2 554.0,356.6 555.5,357.0 557.0,357.6 558.5,358.2 560.0,359.0 561.5,359.9 563.0,360.9 564.5,362.0 566.0,363.2 567.5,364.5 569.0,365.9 570.5,367.4 572.0,369.0 573.5,370.7 575.0,372.5 576.5,374.4 578.0,376.4 579.5,378.5 581.0,380.6 582.5,382.8 584.0,385.1 585.5,387.4 587.0,389.9 588.5,392.3 590.0,394.9 591.5,397.5 593.0,400.1 594.5,402.8 596.0,405.5 597.5,408.3 599.0,411.1 600.5,413.9 602.0,416.8 603.5,419.7 605.0,422.6 606.5,425.5 608.0,428.4 609.5,431.3 611.0,434.2 612.5,437.1 614.0,440.0 615.5,442.9 617.0,445.8 618.5,448.6 620.0,451.4 621.5,454.2 623.0,456.9 624.5,459.6 626.0,462.3 627.5,464.9 629.0,467.4 630.5,469.9 632.0,472.4 633.5,474.7 635.0,477.0 636.5,479.2 638.0,481.4 639.5,483.5 641.0,485.4 642.5,487.3 644.0,489.2 645.5,490.9 647.0,492.5 648.5,494.0 650.0,495.5 651.5,496.8 653.0,498.0 654.5,499.1 656.0,500.2 657.5,501.1 659.0,501.9 660.5,502.5 662.0,503.1 663.5,503.6 665.0,503.9 666.5,504.2 668.0,504.3 669.5,504.3 671.0,504.2 672.5,504.0 674.0,503.6 675.5,503.2 677.0,502.6 678.5,501.9 680.0,501.1 681.5,500.2 683.0,499.2 684.5,498.1 686.0,496.9 687.5,495.6 689.0,494.2 690.5,492.6 692.0,491.0 693.5,489.3 695.0,487.5 696.5,485.6 698.0,483.6 699.5,481.6 701.0,479.4 702.5,477.2 704.0,474.9 705.5,472.6 707.0,470.1 708.5,467.7 710.0,465.1 711.5,462.5 713.0,459.9 714.5,457.2 716.0,454.4 717.5,451.7 719.0,448.9 720.5,446.0 722.0,443.2 723.5,440.3 725.0,437.4 726.5,434.5 728.0,431.6 729.5,428.6 731.0,425.7 732.5,422.8 734.0,419.9 735.5,417.0 737.0,414.2 738.5,411.3 740.0,408.5 741.5,405.8 743.0,403.0 744.5,400.3 746.0,397.7 747.5,395.1 749.0,392.5 750.5,390.1 752.0,387.6 753.5,385.3 755.0,383.0 756.5,380.8 758.0,378.6 759.5,376.6 761.0,374.6 762.5,372.7 764.0,370.9 765.5,369.2 767.0,367.6 768.5,366.0 770.0,364.6 771.5,363.3 773.0,362.1 774.5,361.0 776.0,360.0 777.5,359.1 779.0,358.3 780.5,357.6 782.0,357.0 783.5,356.6 785.0,356.2 786.5,356.0 788.0,355.9 789.5,355.9 791.0,356.0 792.5,356.3 794.0,356.6 795.5,357.1 797.0,357.7 798.5,358.3 800.0,359.1 801.5,360.0 803.0,361.1 804.5,362.2 806.0,363.4 807.5,364.7 809.0,366.2 810.5,367.7 812.0,369.3 813.5,371.0 815.0,372.9 816.5,374.8 818.0,376.7 819.5,378.8 821.0,381.0 822.5,383.2 824.0,385.5 825.5,387.8 827.0,390.3 828.5,392.8 830.0,395.3 831.5,397.9 833.0,400.6 834.5,403.3 836.0,406.0 837.5,408.8 839.0,411.6 840.5,414.4 842.0,417.3 843.5,420.2 845.0,423.1 846.5,426.0 848.0,428.9 849.5,431.8 851.0,434.7 852.5,437.6 854.0,440.5 855.5,443.4 857.0,446.3 858.5,449.1 860.0,451.9 861.5,454.7 863.0,457.4 864.5,460.1 866.0,462.7 867.5,465.3 869.0,467.9 870.5,470.3 872.0,472.8 873.5,475.1 875.0,477.4 876.5,479.6 878.0,481.7 879.5,483.8 881.0,485.8 882.5,487.7 884.0,489.5 885.5,491.2 887.0,492.8 888.5,494.3 890.0,495.7 891.5,497.0 893.0,498.2 894.5,499.3 896.0,500.3 897.5,501.2 899.0,502.0 900.5,502.6 902.0,503.2 903.5,503.6 905.0,504.0 906.5,504.2 908.0,504.3 909.5,504.3 911.0,504.1 912.5,503.9 914.0,503.5 915.5,503.1 917.0,502.5 918.5,501.8 920.0,501.0 921.5,500.1 923.0,499.1 924.5,497.9 926.0,496.7 927.5,495.3 929.0,493.9 930.5,492.4 932.0,490.7 933.5,489.0 935.0,487.2 936.5,485.3 938.0,483.3 939.5,481.2 941.0,479.1 942.5,476.8 944.0,474.5 945.5,472.2 947.0,469.7 948.5,467.2 950.0,464.7 951.5,462.1 953.0,459.4 954.5,456.7 956.0,454.0 957.5,451.2 959.0,448.4 960.5,445.5 962.0,442.7 963.5,439.8 965.0,436.9 966.5,434.0" fill="none" stroke="#119aa4" stroke-width="2.3" stroke-linejoin="round"/><path d="M8.2,418.0 C8.5,418.4 9.5,419.7 10.2,420.3 C10.9,421.0 11.5,421.8 12.2,422.0 C12.9,422.2 13.5,421.6 14.2,421.5 C14.9,421.4 15.5,421.4 16.2,421.2 C16.9,421.0 17.5,420.7 18.2,420.4 C18.9,420.2 19.5,419.7 20.2,419.5 C20.9,419.3 21.5,419.4 22.2,419.3 C22.9,419.2 23.5,419.1 24.2,419.2 C24.9,419.2 25.5,419.5 26.2,419.6 C26.9,419.7 27.5,419.7 28.2,419.8 C28.9,419.9 29.5,419.6 30.2,420.4 C30.9,421.2 31.5,423.3 32.2,424.6 C32.9,425.8 33.5,427.6 34.2,428.1 C34.9,428.6 35.5,427.7 36.2,427.5 C36.9,427.2 37.5,426.7 38.2,426.6 C38.9,426.5 39.5,426.8 40.2,426.9 C40.9,427.1 41.5,427.1 42.2,427.2 C42.9,427.3 43.5,427.2 44.2,427.5 C44.9,427.7 45.5,428.3 46.2,428.6 C46.9,429.0 47.5,429.1 48.2,429.8 C48.9,430.5 49.5,431.8 50.2,432.9 C50.9,433.9 51.5,435.5 52.2,435.9 C52.9,436.3 53.5,435.8 54.2,435.3 C54.9,434.9 55.5,433.8 56.2,433.2 C56.9,432.7 57.5,432.2 58.2,432.1 C58.9,431.9 59.5,432.9 60.2,432.5 C60.9,432.1 61.5,431.1 62.2,429.8 C62.9,428.6 63.5,426.0 64.2,424.9 C64.9,423.9 65.5,423.8 66.2,423.7 C66.9,423.5 67.5,424.0 68.2,424.0 C68.9,423.9 69.5,423.6 70.2,423.6 C70.9,423.6 71.5,423.7 72.2,424.0 C72.9,424.2 73.5,424.6 74.2,425.0 C74.9,425.3 75.5,425.9 76.2,426.3 C76.9,426.6 77.5,427.3 78.2,427.0 C78.9,426.7 79.5,425.4 80.2,424.6 C80.9,423.8 81.5,422.8 82.2,422.3 C82.9,421.9 83.5,422.1 84.2,422.1 C84.9,422.1 85.5,422.4 86.2,422.4 C86.9,422.5 87.5,422.2 88.2,422.3 C88.9,422.3 89.5,422.2 90.2,422.7 C90.9,423.3 91.5,424.7 92.2,425.5 C92.9,426.4 93.5,427.3 94.2,427.7 C94.9,428.2 95.5,428.8 96.2,428.1 C96.9,427.5 97.5,425.6 98.2,424.0 C98.9,422.5 99.5,419.8 100.2,418.8 C100.9,417.9 101.5,418.6 102.2,418.1 C102.9,417.7 103.5,416.9 104.2,416.2 C104.9,415.5 105.5,414.6 106.2,414.0 C106.9,413.4 107.5,412.2 108.2,412.5 C108.9,412.8 109.5,414.4 110.2,415.6 C110.9,416.8 111.5,418.8 112.2,419.7 C112.9,420.6 113.5,420.6 114.2,420.8 C114.9,421.0 115.5,421.2 116.2,420.9 C116.9,420.6 117.5,419.6 118.2,418.8 C118.9,418.0 119.5,416.5 120.2,416.0 C120.9,415.4 121.5,415.8 122.2,415.6 C122.9,415.5 123.5,415.6 124.2,415.2 C124.9,414.9 125.5,413.9 126.2,413.5 C126.9,413.1 127.5,412.6 128.2,412.8 C128.9,413.0 129.5,413.8 130.2,414.8 C130.9,415.8 131.5,417.6 132.2,418.8 C132.9,420.0 133.5,421.3 134.2,421.7 C134.9,422.1 135.5,421.6 136.2,421.4 C136.9,421.2 137.5,420.8 138.2,420.6 C138.9,420.4 139.5,420.4 140.2,420.2 C140.9,419.9 141.5,419.5 142.2,419.1 C142.9,418.6 143.5,417.8 144.2,417.5 C144.9,417.1 145.5,416.6 146.2,416.8 C146.9,417.1 147.5,417.9 148.2,419.2 C148.9,420.4 149.5,422.5 150.2,424.3 C150.9,426.2 151.5,428.5 152.2,430.2 C152.9,431.8 153.5,433.6 154.2,434.5 C154.9,435.3 155.5,435.6 156.2,435.2 C156.9,434.8 157.5,433.4 158.2,432.3 C158.9,431.2 159.5,430.1 160.2,428.9 C160.9,427.7 161.5,426.4 162.2,425.3 C162.9,424.1 163.5,422.6 164.2,422.0 C164.9,421.5 165.5,421.5 166.2,421.8 C166.9,422.0 167.5,422.7 168.2,423.3 C168.9,423.9 169.5,424.6 170.2,425.4 C170.9,426.2 171.5,427.3 172.2,428.0 C172.9,428.7 173.5,429.0 174.2,429.6 C174.9,430.2 175.5,431.0 176.2,431.6 C176.9,432.2 177.5,432.9 178.2,433.1 C178.9,433.4 179.5,433.4 180.2,433.2 C180.9,433.0 181.5,432.3 182.2,431.7 C182.9,431.1 183.5,429.7 184.2,429.3 C184.9,428.9 185.5,428.9 186.2,429.3 C186.9,429.7 187.5,430.9 188.2,431.9 C188.9,432.9 189.5,434.2 190.2,435.2 C190.9,436.2 191.5,437.3 192.2,437.9 C192.9,438.5 193.5,438.8 194.2,438.6 C194.9,438.5 195.5,437.7 196.2,437.0 C196.9,436.3 197.5,435.3 198.2,434.4 C198.9,433.6 199.5,432.7 200.2,431.8 C200.9,431.0 201.5,430.4 202.2,429.5 C202.9,428.5 203.5,427.4 204.2,426.2 C204.9,425.0 205.5,423.2 206.2,422.4 C206.9,421.6 207.5,421.2 208.2,421.2 C208.9,421.2 209.5,421.9 210.2,422.6 C210.9,423.3 211.5,424.2 212.2,425.2 C212.9,426.2 213.5,427.6 214.2,428.6 C214.9,429.6 215.5,430.6 216.2,431.2 C216.9,431.7 217.5,431.8 218.2,431.9 C218.9,431.9 219.5,431.7 220.2,431.4 C220.9,431.2 221.5,430.8 222.2,430.5 C222.9,430.2 223.5,429.6 224.2,429.5 C224.9,429.4 225.5,429.9 226.2,429.8 C226.9,429.8 227.5,429.6 228.2,429.1 C228.9,428.5 229.5,427.4 230.2,426.5 C230.9,425.7 231.5,424.5 232.2,423.9 C232.9,423.3 233.5,423.4 234.2,423.0 C234.9,422.6 235.5,422.3 236.2,421.7 C236.9,421.0 237.5,419.7 238.2,419.1 C238.9,418.5 239.5,418.2 240.2,418.0 C240.9,417.8 241.5,418.2 242.2,418.0 C242.9,417.8 243.5,417.0 244.2,416.8 C244.9,416.5 245.5,416.7 246.2,416.6 C246.9,416.6 247.5,415.8 248.2,416.4 C248.9,416.9 249.5,418.8 250.2,419.9 C250.9,420.9 251.5,422.0 252.2,422.6 C252.9,423.3 253.5,423.5 254.2,423.8 C254.9,424.1 255.5,424.3 256.2,424.5 C256.9,424.8 257.5,425.1 258.2,425.1 C258.9,425.1 259.5,425.1 260.2,424.4 C260.9,423.8 261.5,422.3 262.2,421.2 C262.9,420.0 263.5,418.4 264.2,417.5 C264.9,416.6 265.5,415.9 266.2,415.9 C266.9,415.8 267.5,416.8 268.2,417.3 C268.9,417.9 269.5,418.8 270.2,419.2 C270.9,419.6 271.5,419.6 272.2,419.8 C272.9,420.0 273.5,420.2 274.2,420.6 C274.9,420.9 275.5,421.3 276.2,421.8 C276.9,422.3 277.5,423.3 278.2,423.6 C278.9,423.9 279.5,424.0 280.2,423.7 C280.9,423.3 281.5,422.2 282.2,421.6 C282.9,421.0 283.5,420.4 284.2,420.0 C284.9,419.6 285.5,419.3 286.2,419.2 C286.9,419.2 287.5,419.1 288.2,419.4 C288.9,419.8 289.5,420.5 290.2,421.1 C290.9,421.7 291.5,422.5 292.2,423.2 C292.9,423.9 293.5,424.8 294.2,425.4 C294.9,426.1 295.5,426.6 296.2,427.1 C296.9,427.6 297.5,428.2 298.2,428.4 C298.9,428.6 299.5,428.8 300.2,428.2 C300.9,427.6 301.5,426.3 302.2,424.9 C302.9,423.6 303.5,421.5 304.2,419.9 C304.9,418.4 305.5,416.6 306.2,415.6 C306.9,414.6 307.5,414.5 308.2,414.1 C308.9,413.7 309.5,413.3 310.2,413.1 C310.9,412.9 311.5,412.8 312.2,413.1 C312.9,413.3 313.5,414.2 314.2,414.5 C314.9,414.8 315.5,414.7 316.2,415.1 C316.9,415.4 317.5,416.5 318.2,416.7 C318.9,416.9 319.5,416.5 320.2,416.2 C320.9,415.9 321.5,415.0 322.2,414.7 C322.9,414.4 323.5,414.3 324.2,414.4 C324.9,414.6 325.5,415.0 326.2,415.7 C326.9,416.5 327.5,418.2 328.2,419.0 C328.9,419.7 329.5,420.8 330.2,420.5 C330.9,420.1 331.5,418.4 332.2,416.9 C332.9,415.3 333.5,412.6 334.2,411.2 C334.9,409.9 335.5,409.4 336.2,408.7 C336.9,408.1 337.5,408.2 338.2,407.3 C338.9,406.5 339.5,404.6 340.2,403.7 C340.9,402.7 341.5,401.9 342.2,401.6 C342.9,401.2 343.5,401.3 344.2,401.5 C344.9,401.6 345.5,402.1 346.2,402.6 C346.9,403.0 347.5,404.4 348.2,404.3 C348.9,404.2 349.5,403.2 350.2,402.0 C350.9,400.8 351.5,398.3 352.2,397.2 C352.9,396.2 353.5,395.1 354.2,395.7 C354.9,396.4 355.5,399.2 356.2,401.2 C356.9,403.2 357.5,406.4 358.2,407.7 C358.9,409.0 359.5,408.6 360.2,409.1 C360.9,409.7 361.5,410.4 362.2,410.9 C362.9,411.4 363.5,411.9 364.2,412.0 C364.9,412.0 365.5,411.2 366.2,411.1 C366.9,410.9 367.5,410.9 368.2,411.0 C368.9,411.1 369.5,411.3 370.2,411.5 C370.9,411.7 371.5,412.0 372.2,412.2 C372.9,412.5 373.5,413.8 374.2,413.2 C374.9,412.6 375.5,410.6 376.2,408.8 C376.9,407.0 377.5,403.6 378.2,402.4 C378.9,401.2 379.5,401.2 380.2,401.5 C380.9,401.8 381.5,403.2 382.2,404.0 C382.9,404.8 383.5,405.7 384.2,406.3 C384.9,406.8 385.5,407.1 386.2,407.3 C386.9,407.4 387.5,407.0 388.2,407.1 C388.9,407.1 389.5,407.3 390.2,407.5 C390.9,407.8 391.5,408.1 392.2,408.5 C392.9,408.8 393.5,408.9 394.2,409.6 C394.9,410.3 395.5,410.9 396.2,412.6 C396.9,414.3 397.5,417.5 398.2,419.7 C398.9,422.0 399.5,424.6 400.2,425.9 C400.9,427.2 401.5,426.8 402.2,427.5 C402.9,428.1 403.5,428.9 404.2,429.7 C404.9,430.5 405.5,431.8 406.2,432.2 C406.9,432.6 407.5,432.7 408.2,432.2 C408.9,431.6 409.5,430.1 410.2,428.9 C410.9,427.7 411.5,425.8 412.2,424.9 C412.9,424.1 413.5,423.6 414.2,423.9 C414.9,424.2 415.5,426.0 416.2,426.6 C416.9,427.3 417.5,427.7 418.2,428.0 C418.9,428.3 419.5,427.9 420.2,428.4 C420.9,428.8 421.5,429.8 422.2,430.5 C422.9,431.1 423.5,431.8 424.2,432.5 C424.9,433.1 425.5,434.1 426.2,434.5 C426.9,435.0 427.5,435.0 428.2,435.3 C428.9,435.7 429.5,435.9 430.2,436.5 C430.9,437.2 431.5,438.5 432.2,439.2 C432.9,440.0 433.5,440.8 434.2,440.9 C434.9,440.9 435.5,440.3 436.2,439.7 C436.9,439.1 437.5,437.9 438.2,437.2 C438.9,436.4 439.5,435.7 440.2,435.4 C440.9,435.2 441.5,435.2 442.2,435.6 C442.9,436.0 443.5,437.0 444.2,437.7 C444.9,438.5 445.5,439.4 446.2,439.9 C446.9,440.4 447.5,440.5 448.2,440.8 C448.9,441.1 449.5,441.5 450.2,441.6 C450.9,441.7 451.5,441.8 452.2,441.3 C452.9,440.9 453.5,439.8 454.2,439.1 C454.9,438.3 455.5,437.4 456.2,436.8 C456.9,436.1 457.5,435.7 458.2,435.2 C458.9,434.7 459.5,433.9 460.2,433.8 C460.9,433.8 461.5,434.2 462.2,435.0 C462.9,435.9 463.5,437.9 464.2,439.0 C464.9,440.0 465.5,440.9 466.2,441.3 C466.9,441.8 467.5,441.6 468.2,441.7 C468.9,441.9 469.5,442.1 470.2,442.3 C470.9,442.4 471.5,442.4 472.2,442.6 C472.9,442.7 473.5,443.3 474.2,443.2 C474.9,443.1 475.5,442.9 476.2,442.1 C476.9,441.3 477.5,439.5 478.2,438.5 C478.9,437.4 479.5,436.3 480.2,435.8 C480.9,435.3 481.5,435.2 482.2,435.3 C482.9,435.5 483.5,436.0 484.2,436.5 C484.9,437.0 485.5,437.7 486.2,438.2 C486.9,438.6 487.5,438.9 488.2,439.1 C488.9,439.2 489.5,438.9 490.2,439.0 C490.9,439.1 491.5,439.4 492.2,439.8 C492.9,440.1 493.5,440.8 494.2,441.1 C494.9,441.3 495.5,441.3 496.2,441.1 C496.9,440.9 497.5,440.3 498.2,439.8 C498.9,439.3 499.5,438.7 500.2,438.2 C500.9,437.8 501.5,437.4 502.2,437.2 C502.9,437.0 503.5,437.0 504.2,437.0 C504.9,437.0 505.5,437.2 506.2,437.1 C506.9,437.1 507.5,436.5 508.2,436.8 C508.9,437.1 509.5,438.1 510.2,438.8 C510.9,439.6 511.5,441.1 512.2,441.4 C512.9,441.7 513.5,440.9 514.2,440.4 C514.9,439.9 515.5,439.1 516.2,438.2 C516.9,437.3 517.5,436.0 518.2,435.2 C518.9,434.4 519.5,433.6 520.2,433.5 C520.9,433.4 521.5,434.2 522.2,434.8 C522.9,435.4 523.5,436.6 524.2,437.2 C524.9,437.8 525.5,438.3 526.2,438.4 C526.9,438.4 527.5,438.2 528.2,437.5 C528.9,436.8 529.5,435.4 530.2,434.2 C530.9,433.1 531.5,431.5 532.2,430.5 C532.9,429.5 533.5,428.5 534.2,428.0 C534.9,427.5 535.5,427.6 536.2,427.4 C536.9,427.1 537.5,427.0 538.2,426.6 C538.9,426.1 539.5,425.1 540.2,424.7 C540.9,424.3 541.5,423.8 542.2,424.0 C542.9,424.3 543.5,425.4 544.2,426.3 C544.9,427.2 545.5,429.3 546.2,429.7 C546.9,430.1 547.5,429.6 548.2,428.8 C548.9,428.0 549.5,425.5 550.2,425.0 C550.9,424.5 551.5,425.3 552.2,425.8 C552.9,426.3 553.5,427.5 554.2,427.8 C554.9,428.1 555.5,428.1 556.2,427.5 C556.9,426.8 557.5,425.2 558.2,423.9 C558.9,422.6 559.5,420.9 560.2,419.6 C560.9,418.3 561.5,416.8 562.2,415.9 C562.9,415.0 563.5,414.6 564.2,414.3 C564.9,413.9 565.5,414.2 566.2,414.0 C566.9,413.8 567.5,413.2 568.2,412.9 C568.9,412.5 569.5,412.0 570.2,411.9 C570.9,411.8 571.5,411.9 572.2,412.3 C572.9,412.7 573.5,413.8 574.2,414.3 C574.9,414.8 575.5,415.5 576.2,415.3 C576.9,415.2 577.5,414.6 578.2,413.4 C578.9,412.3 579.5,410.2 580.2,408.3 C580.9,406.5 581.5,403.8 582.2,402.4 C582.9,401.1 583.5,400.4 584.2,400.3 C584.9,400.1 585.5,401.4 586.2,401.6 C586.9,401.8 587.5,401.8 588.2,401.6 C588.9,401.4 589.5,400.5 590.2,400.3 C590.9,400.0 591.5,399.9 592.2,400.0 C592.9,400.1 593.5,400.7 594.2,400.8 C594.9,400.9 595.5,400.9 596.2,400.9 C596.9,400.9 597.5,400.8 598.2,400.7 C598.9,400.7 599.5,400.6 600.2,400.7 C600.9,400.8 601.5,401.1 602.2,401.2 C602.9,401.4 603.5,401.6 604.2,401.5 C604.9,401.5 605.5,400.9 606.2,400.7 C606.9,400.5 607.5,400.1 608.2,400.3 C608.9,400.5 609.5,401.5 610.2,402.0 C610.9,402.5 611.5,403.1 612.2,403.3 C612.9,403.5 613.5,403.3 614.2,403.2 C614.9,403.2 615.5,403.4 616.2,403.0 C616.9,402.6 617.5,401.7 618.2,400.9 C618.9,400.0 619.5,398.6 620.2,398.0 C620.9,397.5 621.5,397.4 622.2,397.5 C622.9,397.6 623.5,397.9 624.2,398.4 C624.9,399.0 625.5,399.9 626.2,400.8 C626.9,401.8 627.5,403.4 628.2,404.0 C628.9,404.6 629.5,404.4 630.2,404.4 C630.9,404.4 631.5,403.7 632.2,403.9 C632.9,404.2 633.5,405.1 634.2,406.0 C634.9,406.8 635.5,408.0 636.2,408.9 C636.9,409.7 637.5,410.4 638.2,411.0 C638.9,411.5 639.5,412.0 640.2,412.4 C640.9,412.8 641.5,413.3 642.2,413.5 C642.9,413.7 643.5,413.6 644.2,413.4 C644.9,413.3 645.5,412.6 646.2,412.4 C646.9,412.3 647.5,412.4 648.2,412.4 C648.9,412.3 649.5,412.3 650.2,412.2 C650.9,412.0 651.5,411.4 652.2,411.3 C652.9,411.2 653.5,411.4 654.2,411.6 C654.9,411.7 655.5,412.2 656.2,412.2 C656.9,412.1 657.5,411.6 658.2,411.5 C658.9,411.4 659.5,410.6 660.2,411.3 C660.9,411.9 661.5,413.6 662.2,415.4 C662.9,417.3 663.5,421.1 664.2,422.4 C664.9,423.7 665.5,423.3 666.2,423.1 C666.9,423.0 667.5,422.0 668.2,421.6 C668.9,421.2 669.5,420.8 670.2,420.7 C670.9,420.7 671.5,421.0 672.2,421.2 C672.9,421.5 673.5,421.8 674.2,422.3 C674.9,422.8 675.5,423.5 676.2,424.3 C676.9,425.1 677.5,426.2 678.2,427.2 C678.9,428.2 679.5,429.7 680.2,430.2 C680.9,430.8 681.5,431.0 682.2,430.6 C682.9,430.3 683.5,429.0 684.2,428.1 C684.9,427.1 685.5,425.6 686.2,425.1 C686.9,424.7 687.5,425.1 688.2,425.6 C688.9,426.2 689.5,427.5 690.2,428.3 C690.9,429.2 691.5,430.0 692.2,430.6 C692.9,431.2 693.5,431.6 694.2,431.8 C694.9,432.1 695.5,432.0 696.2,432.2 C696.9,432.3 697.5,432.5 698.2,432.7 C698.9,432.9 699.5,433.5 700.2,433.4 C700.9,433.3 701.5,432.7 702.2,432.3 C702.9,431.9 703.5,431.3 704.2,431.0 C704.9,430.8 705.5,431.1 706.2,431.0 C706.9,430.9 707.5,430.7 708.2,430.3 C708.9,430.0 709.5,429.2 710.2,428.8 C710.9,428.4 711.5,427.8 712.2,427.9 C712.9,428.0 713.5,428.8 714.2,429.3 C714.9,429.9 715.5,430.8 716.2,431.2 C716.9,431.6 717.5,431.8 718.2,431.7 C718.9,431.6 719.5,431.1 720.2,430.7 C720.9,430.2 721.5,429.3 722.2,429.0 C722.9,428.7 723.5,428.9 724.2,428.8 C724.9,428.8 725.5,429.0 726.2,428.8 C726.9,428.7 727.5,428.1 728.2,427.9 C728.9,427.8 729.5,427.7 730.2,427.8 C730.9,427.9 731.5,428.3 732.2,428.5 C732.9,428.8 733.5,428.6 734.2,429.1 C734.9,429.7 735.5,431.0 736.2,431.9 C736.9,432.7 737.5,433.8 738.2,434.4 C738.9,435.1 739.5,434.8 740.2,435.6 C740.9,436.5 741.5,438.2 742.2,439.3 C742.9,440.4 743.5,441.8 744.2,442.2 C744.9,442.7 745.5,442.5 746.2,442.2 C746.9,441.9 747.5,441.2 748.2,440.5 C748.9,439.8 749.5,438.6 750.2,438.0 C750.9,437.4 751.5,437.1 752.2,436.9 C752.9,436.7 753.5,436.7 754.2,436.6 C754.9,436.5 755.5,436.4 756.2,436.3 C756.9,436.1 757.5,436.3 758.2,435.8 C758.9,435.3 759.5,434.1 760.2,433.3 C760.9,432.5 761.5,431.4 762.2,431.1 C762.9,430.9 763.5,431.5 764.2,431.7 C764.9,432.0 765.5,432.4 766.2,432.7 C766.9,433.0 767.5,433.0 768.2,433.5 C768.9,434.1 769.5,435.2 770.2,435.9 C770.9,436.6 771.5,437.3 772.2,437.6 C772.9,437.8 773.5,437.4 774.2,437.5 C774.9,437.6 775.5,437.8 776.2,438.1 C776.9,438.3 777.5,438.6 778.2,438.9 C778.9,439.2 779.5,439.5 780.2,439.9 C780.9,440.3 781.5,440.9 782.2,441.2 C782.9,441.4 783.5,441.3 784.2,441.4 C784.9,441.4 785.5,441.5 786.2,441.4 C786.9,441.4 787.5,441.4 788.2,441.0 C788.9,440.6 789.5,439.7 790.2,438.9 C790.9,438.1 791.5,436.8 792.2,436.1 C792.9,435.4 793.5,435.1 794.2,434.8 C794.9,434.6 795.5,434.9 796.2,434.4 C796.9,433.9 797.5,432.8 798.2,431.8 C798.9,430.9 799.5,429.7 800.2,428.9 C800.9,428.1 801.5,427.4 802.2,427.2 C802.9,426.9 803.5,427.3 804.2,427.5 C804.9,427.7 805.5,428.4 806.2,428.5 C806.9,428.7 807.5,428.8 808.2,428.5 C808.9,428.1 809.5,427.2 810.2,426.3 C810.9,425.3 811.5,423.6 812.2,422.6 C812.9,421.7 813.5,420.8 814.2,420.8 C814.9,420.7 815.5,421.5 816.2,422.2 C816.9,423.0 817.5,424.5 818.2,425.3 C818.9,426.1 819.5,426.9 820.2,427.0 C820.9,427.1 821.5,426.5 822.2,425.8 C822.9,425.1 823.5,423.9 824.2,423.0 C824.9,422.1 825.5,421.1 826.2,420.5 C826.9,419.9 827.5,419.7 828.2,419.3 C828.9,418.9 829.5,419.3 830.2,418.4 C830.9,417.4 831.5,415.3 832.2,413.7 C832.9,412.1 833.5,409.7 834.2,408.6 C834.9,407.5 835.5,406.8 836.2,406.9 C836.9,407.1 837.5,408.8 838.2,409.6 C838.9,410.5 839.5,411.9 840.2,412.3 C840.9,412.7 841.5,411.9 842.2,412.1 C842.9,412.2 843.5,412.4 844.2,413.2 C844.9,413.9 845.5,415.6 846.2,416.5 C846.9,417.4 847.5,418.2 848.2,418.6 C848.9,419.0 849.5,419.1 850.2,418.8 C850.9,418.5 851.5,417.4 852.2,416.7 C852.9,416.0 853.5,415.0 854.2,414.6 C854.9,414.3 855.5,414.9 856.2,414.8 C856.9,414.7 857.5,414.1 858.2,413.8 C858.9,413.4 859.5,412.8 860.2,412.5 C860.9,412.2 861.5,412.0 862.2,412.0 C862.9,411.9 863.5,412.0 864.2,412.4 C864.9,412.7 865.5,413.3 866.2,413.8 C866.9,414.3 867.5,415.2 868.2,415.6 C868.9,416.0 869.5,416.3 870.2,416.3 C870.9,416.3 871.5,415.8 872.2,415.6 C872.9,415.3 873.5,415.0 874.2,414.8 C874.9,414.6 875.5,414.6 876.2,414.6 C876.9,414.6 877.5,414.5 878.2,414.6 C878.9,414.7 879.5,415.0 880.2,415.1 C880.9,415.3 881.5,415.5 882.2,415.6 C882.9,415.8 883.5,415.9 884.2,416.0 C884.9,416.0 885.5,416.0 886.2,416.1 C886.9,416.1 887.5,416.2 888.2,416.3 C888.9,416.4 889.5,416.4 890.2,416.6 C890.9,416.8 891.5,416.9 892.2,417.5 C892.9,418.1 893.5,419.3 894.2,420.2 C894.9,421.1 895.5,422.4 896.2,422.9 C896.9,423.5 897.5,423.5 898.2,423.4 C898.9,423.3 899.5,422.9 900.2,422.1 C900.9,421.2 901.5,419.7 902.2,418.4 C902.9,417.0 903.5,415.0 904.2,414.2 C904.9,413.4 905.5,413.3 906.2,413.5 C906.9,413.6 907.5,414.5 908.2,415.2 C908.9,415.8 909.5,416.5 910.2,417.4 C910.9,418.2 911.5,419.5 912.2,420.2 C912.9,420.9 913.5,421.4 914.2,421.5 C914.9,421.5 915.5,420.7 916.2,420.7 C916.9,420.7 917.5,421.1 918.2,421.4 C918.9,421.8 919.5,422.5 920.2,422.9 C920.9,423.4 921.5,423.9 922.2,424.2 C922.9,424.6 923.5,424.7 924.2,424.8 C924.9,424.9 925.5,424.7 926.2,424.7 C926.9,424.6 927.5,424.6 928.2,424.7 C928.9,424.8 929.5,425.1 930.2,425.2 C930.9,425.3 931.5,425.4 932.2,425.4 C932.9,425.3 933.5,425.2 934.2,424.9 C934.9,424.6 935.5,424.1 936.2,423.7 C936.9,423.3 937.5,422.7 938.2,422.4 C938.9,422.1 939.5,422.0 940.2,421.8 C940.9,421.6 941.5,421.3 942.2,421.2 C942.9,421.1 943.5,421.0 944.2,421.1 C944.9,421.3 945.5,421.9 946.2,422.2 C946.9,422.5 947.5,422.8 948.2,423.1 C948.9,423.4 949.5,423.5 950.2,423.8 C950.9,424.1 951.5,424.6 952.2,424.8 C952.9,425.0 953.5,425.4 954.2,425.1 C954.9,424.9 955.5,424.1 956.2,423.3 C956.9,422.5 957.5,421.1 958.2,420.3 C958.9,419.5 959.5,419.1 960.2,418.6 C960.9,418.1 961.5,417.5 962.2,417.4 C962.9,417.2 963.5,417.3 964.2,417.7 C964.9,418.1 965.9,419.4 966.2,419.7" fill="none" stroke="#bcaa00" stroke-width="2.0" stroke-linejoin="round"/></svg><div class="t" style="left:18px;top:84.7px;font-size:6.8px;color:#c4c4c4">50 dB</div><div class="t" style="left:18px;top:162.7px;font-size:6.8px;color:#c4c4c4">0 dB</div><div class="t" style="left:18px;top:240.7px;font-size:6.8px;color:#c4c4c4">-50 dB</div><div class="t" style="right:101px;top:100.5px;font-size:6.6px;color:#c8c8c8">100 °</div><div class="t" style="right:101px;top:162.5px;font-size:6.6px;color:#c8c8c8">0 °</div><div class="t" style="right:101px;top:224.5px;font-size:6.6px;color:#c8c8c8">-100 °</div><div class="t" style="left:148.4px;top:282.5px;width:40px;text-align:center;font-size:6.6px;color:#bdbdbd">100 Hz</div><div class="t" style="left:308.25px;top:282.5px;width:40px;text-align:center;font-size:6.6px;color:#bdbdbd">1 kHz</div><div class="t" style="left:468.1px;top:282.5px;width:40px;text-align:center;font-size:6.6px;color:#bdbdbd">10 kHz</div><div class="t" style="left:627.9499999999999px;top:282.5px;width:40px;text-align:center;font-size:6.6px;color:#bdbdbd">100 kHz</div><div class="t" style="left:787.8px;top:282.5px;width:40px;text-align:center;font-size:6.6px;color:#bdbdbd">1 MHz</div><div class="a" style="left:847.5px;top:53.5px;width:108px;height:31px;border:1px solid #777;background:transparent"></div><div class="a" style="left:858px;top:58.5px;width:22px;height:5.5px;background:#008a00"></div><div class="a" style="left:858px;top:71.5px;width:22px;height:5.5px;background:#ff0000"></div><div class="t" style="left:891px;top:56.5px;font-size:9px;color:#008a00">Gain</div><div class="t" style="left:891px;top:69.8px;font-size:8.6px;color:#e00000">Phase</div><div class="t" style="right:101px;top:327.6px;font-size:7px;color:#14a4ac">42.740 mV</div><div class="t" style="right:101px;top:352.40000000000003px;font-size:7px;color:#14a4ac">32.055 mV</div><div class="t" style="right:101px;top:377.2px;font-size:7px;color:#14a4ac">21.370 mV</div><div class="t" style="right:101px;top:402.0px;font-size:7px;color:#14a4ac">10.685 mV</div><div class="t" style="right:101px;top:451.6px;font-size:7px;color:#14a4ac">-10.685 mV</div><div class="t" style="right:101px;top:476.40000000000003px;font-size:7px;color:#14a4ac">-21.370 mV</div><div class="t" style="right:101px;top:501.2px;font-size:7px;color:#14a4ac">-32.055 mV</div><div class="t" style="right:101px;top:526.0000000000001px;font-size:7px;color:#14a4ac">-42.740 mV</div><div class="t" style="left:84.7px;width:40px;text-align:center;top:545.2px;font-size:6.8px;color:#a8c8a8">-1.6 μs</div><div class="t" style="left:180.60000000000002px;width:40px;text-align:center;top:545.2px;font-size:6.8px;color:#a8c8a8">-1.2 μs</div><div class="t" style="left:276.50000000000006px;width:40px;text-align:center;top:545.2px;font-size:6.8px;color:#a8c8a8">-800 ns</div><div class="t" style="left:372.40000000000003px;width:40px;text-align:center;top:545.2px;font-size:6.8px;color:#a8c8a8">-400 ns</div><div class="t" style="left:468.3px;width:40px;text-align:center;top:545.2px;font-size:6.8px;color:#a8c8a8">0 s</div><div class="t" style="left:564.2px;width:40px;text-align:center;top:545.2px;font-size:6.8px;color:#a8c8a8">400 ns</div><div class="t" style="left:660.1px;width:40px;text-align:center;top:545.2px;font-size:6.8px;color:#a8c8a8">800 ns</div><div class="t" style="left:756.0px;width:40px;text-align:center;top:545.2px;font-size:6.8px;color:#a8c8a8">1.2 μs</div><div class="t" style="left:851.9px;width:40px;text-align:center;top:545.2px;font-size:6.8px;color:#a8c8a8">1.6 μs</div><svg class="a" style="left:10px;top:422px" width="22" height="16"><path d="M1.3 1 H14.5 L19.8 7.8 L14.5 14.6 H1.3 Z" fill="#20d2de"/></svg><div class="t" style="left:13.3px;top:425.5px;font-size:8.8px;color:#043035">C 2</div><svg class="a" style="left:953px;top:423px" width="15" height="14"><path d="M2.5 6.5 L9 1 V5 H14 V8 H9 V12 Z" fill="#22d0e0"/></svg><div class="a" style="left:329px;top:294.5px;width:320px;height:9px;background:#2e2e2e"></div><div class="a" style="left:328.8px;top:295px;width:3px;height:8.5px;border:1px solid #a4a4a4;border-right:none;border-radius:1px 0 0 1px"></div><div class="a" style="left:644.5px;top:295px;width:3px;height:8.5px;border:1px solid #a4a4a4;border-left:none;border-radius:0 1px 1px 0"></div><div class="a" style="left:330px;top:298.3px;width:316px;height:2.5px;background:#7c7c7c"></div><svg class="a" style="left:0;top:0" width="1066" height="610" viewBox="0 0 1066 610"><path d="M484 292.3 H492 L491 295 H485 Z" fill="#f0902a"/><rect x="484.6" y="296.2" width="7" height="8.6" rx="3.2" fill="#2a2218" stroke="#e08a28" stroke-width="1"/><path d="M486.3 299 H489.9 M488.1 299 V303" stroke="#b06a20" stroke-width="1.2"/><path d="M482.7 306 H493.5 L488.1 312 Z" fill="#f0902a"/><path d="M483.4 312.3 H493.2 V322.3 H490.2 L488.3 326.5 L486.4 322.3 H483.4 Z" fill="#000" stroke="#f0902a" stroke-width="1.3"/><path d="M485.6 315.3 H491 M488.3 315.3 V320.5" stroke="#f0902a" stroke-width="1.7"/></svg><svg class="a" style="left:944px;top:45px" width="22" height="22"><path d="M1 0 H20 V19 Z" fill="#5a5a5a"/><circle cx="16" cy="4.5" r="2.6" fill="none" stroke="#bbb" stroke-width="1"/><path d="M14 6.5 L10 11" stroke="#bbb" stroke-width="1.2"/></svg><svg class="a" style="left:944px;top:310px" width="22" height="22"><path d="M1 0 H20 V19 Z" fill="#5a5a5a"/><circle cx="16" cy="4.5" r="2.6" fill="none" stroke="#bbb" stroke-width="1"/><path d="M14 6.5 L10 11" stroke="#bbb" stroke-width="1.2"/></svg><div class="a" style="left:972.7px;top:285.2px;width:1.7px;height:1.7px;background:#c4c4c4;border-radius:0.5px"></div><div class="a" style="left:972.7px;top:289.9px;width:1.7px;height:1.7px;background:#c4c4c4;border-radius:0.5px"></div><div class="a" style="left:972.7px;top:294.6px;width:1.7px;height:1.7px;background:#c4c4c4;border-radius:0.5px"></div><div class="badge" style="left:8.2px;top:557.9px;width:49.8px;height:43.2px;overflow:hidden"><div class="bh" style="background:#4a4820;color:#d8d020;height:9.6px;line-height:10.4px;font-size:8.0px;padding-left:3.8px">Ch 1</div><div class="t" style="left:4.3px;top:13.2px;font-size:7.6px">500 μV/div</div><div class="t" style="left:4.3px;top:23.85px;font-size:7.6px">1 MΩ &nbsp;&nbsp;&nbsp;∿</div><div class="t" style="left:4.3px;top:34.5px;font-size:7.6px">20 MHz</div><svg class="a" style="left:41px;top:34px" width="8" height="7"><rect x="0.5" y="0.5" width="3.2" height="3.2" fill="#333"/><path d="M3 3.5 H7 L5 6 Z" fill="#333"/></svg></div><div class="badge" style="left:60.6px;top:557.9px;width:49.6px;height:43.2px;overflow:hidden"><div class="bh" style="background:#22d0dc;color:#0a3a40;height:9.6px;line-height:10.4px;font-size:8.0px;padding-left:3.8px">Ch 2</div><div class="t" style="left:4.3px;top:13.2px;font-size:7.6px">10.685 m...</div><div class="t" style="left:4.3px;top:23.85px;font-size:7.6px">1 MΩ &nbsp;&nbsp;&nbsp;∿</div><div class="t" style="left:4.3px;top:34.5px;font-size:7.6px">20 MHz</div><svg class="a" style="left:41px;top:34px" width="8" height="7"><rect x="0.5" y="0.5" width="3.2" height="3.2" fill="#333"/><path d="M3 3.5 H7 L5 6 Z" fill="#333"/></svg></div><div class="cb" style="left:232.3px"><i style="background:#c8404c"></i><div class="t" style="left:0;right:0;top:19.5px;font-size:11.5px">3</div></div><div class="cb" style="left:257px"><i style="background:#80b030"></i><div class="t" style="left:0;right:0;top:19.5px;font-size:11.5px">4</div></div><div class="cb" style="left:281.7px"><i style="background:#e08a30"></i><div class="t" style="left:0;right:0;top:19.5px;font-size:11.5px">5</div></div><div class="cb" style="left:306.1px"><i style="background:#2828a8"></i><div class="t" style="left:0;right:0;top:19.5px;font-size:11.5px">6</div></div><div class="cb" style="left:330.7px"><i style="background:#c040a0"></i><div class="t" style="left:0;right:0;top:19.5px;font-size:11.5px">7</div></div><div class="cb" style="left:355.6px"><i style="background:#20b080"></i><div class="t" style="left:0;right:0;top:19.5px;font-size:11.5px">8</div></div><div class="cb" style="left:390.2px;width:21.5px"><i style="background:#d08030"></i><div class="t" style="left:-2px;right:-2px;top:11px;font-size:8.6px;line-height:9.3px;letter-spacing:-0.2px">Add<br>New<br>Math</div></div><div class="cb" style="left:414.3px;width:21.5px"><i style="background:#9098a8"></i><div class="t" style="left:-2px;right:-2px;top:11px;font-size:8.6px;line-height:9.3px;letter-spacing:-0.2px">Add<br>New<br>Ref</div></div><div class="cb" style="left:439px;width:21.5px"><i style="background:#a040c0"></i><div class="t" style="left:-2px;right:-2px;top:11px;font-size:8.6px;line-height:9.3px;letter-spacing:-0.2px">Add<br>New<br>Bus</div></div><div class="cb" style="left:472.6px;width:21.5px"><i style="background:#3a3a3a"></i><div class="t" style="left:-2px;right:-2px;top:20.5px;font-size:8.6px;line-height:9.3px;letter-spacing:-0.2px">DVM</div></div><div class="a" style="left:379.6px;top:556.5px;width:7.8px;height:44.5px;background:linear-gradient(90deg,#222 0,#222 33%,#3a3a3a 33%,#3a3a3a 66%,#222 66%)"></div><div class="a" style="left:462.6px;top:556.5px;width:7.8px;height:44.5px;background:linear-gradient(90deg,#222 0,#222 33%,#3a3a3a 33%,#3a3a3a 66%,#222 66%)"></div><div class="a" style="left:496.70000000000005px;top:556.5px;width:7.8px;height:44.5px;background:linear-gradient(90deg,#222 0,#222 33%,#3a3a3a 33%,#3a3a3a 66%,#222 66%)"></div><div class="a" style="left:995.8000000000001px;top:556.5px;width:7.8px;height:44.5px;background:linear-gradient(90deg,#222 0,#222 33%,#3a3a3a 33%,#3a3a3a 66%,#222 66%)"></div><div class="badge" style="left:507.2px;top:558.3px;width:108.4px;height:42.2px;overflow:hidden"><div class="bh" style="background:#5a5a5a;color:#e8e8e8;height:9.6px;line-height:10.4px;font-size:8.6px;padding-left:2.3px">AFG: Sine</div><div class="t" style="left:2.8px;top:13.2px;font-size:7.6px">Freq: 1 MHz</div><div class="t" style="left:2.8px;top:23.85px;font-size:7.6px">Amp: 400 mV/pp</div><div class="t" style="left:2.8px;top:34.5px;font-size:7.6px">Offset: 0 V</div></div><div class="badge" style="left:619.3px;top:558.3px;width:86.1px;height:42.2px;overflow:hidden"><div class="bh" style="background:#5a5a5a;color:#e8e8e8;height:9.6px;line-height:10.4px;font-size:8.6px;padding-left:2.3px">Spectrum</div><div class="t" style="left:2.8px;top:13.2px;font-size:7.6px">CF: 1.00000000 MHz</div><div class="t" style="left:2.8px;top:23.85px;font-size:7.6px">Span: 100.000 kHz</div><div class="t" style="left:2.8px;top:34.5px;font-size:7.6px">RBW: 100 Hz</div></div><div class="badge" style="left:709.9px;top:558.3px;width:108.3px;height:42.2px;overflow:hidden"><div class="bh" style="background:#5a5a5a;color:#e8e8e8;height:9.6px;line-height:10.4px;font-size:8.6px;padding-left:2.3px">Horizontal</div><div class="t" style="left:2.8px;top:13.2px;font-size:7.6px">400 ns/div</div><div class="t" style="left:2.8px;top:23.85px;font-size:7.6px"><span style="letter-spacing:-0.2px">SR: 1.5625 GS/s</span></div><div class="t" style="left:2.8px;top:34.5px;font-size:7.6px">RL: 6.25 kpts</div><div class="t" style="left:60.5px;top:13.2px;font-size:7.6px">4 μs</div><div class="t" style="left:60.5px;top:23.85px;font-size:7.6px">640 ps/pt</div><div class="t" style="left:60.5px;top:34.5px;font-size:7.6px"><span style="color:#e07a10;font-size:6px">&#x25BC;</span> 50%</div></div><div class="badge" style="left:822.4px;top:558.3px;width:86.4px;height:42.2px;overflow:hidden"><div class="bh" style="background:#5a5a5a;color:#e8e8e8;height:9.6px;line-height:10.4px;font-size:8.6px;padding-left:2.3px">Trigger</div><div class="a" style="left:2.6px;top:12.7px;width:16.4px;height:8.2px;border-radius:3px;background:#22d0dc;border:0.8px solid #0a6a70"></div><div class="t" style="left:8.5px;top:13.2px;font-size:7px;font-style:italic;color:#0a3a40">2</div><svg class="a" style="left:24px;top:13px" width="11" height="8"><path d="M1 7 C4 7 4 1 9.5 1" fill="none" stroke="#6a6ab8" stroke-width="1.1"/></svg><div class="t" style="left:38.5px;top:13px;font-size:7.8px">0 V</div></div><div class="badge" style="left:913px;top:558.3px;width:80.3px;height:42.2px;overflow:hidden"><div class="bh" style="background:#5a5a5a;color:#e8e8e8;height:9.6px;line-height:10.4px;font-size:8.6px;padding-left:2.3px">Acquisition</div><div class="t" style="left:2.8px;top:13.2px;font-size:7.6px">Auto,</div><div class="t" style="left:2.8px;top:23.85px;font-size:7.6px">High Res: 13 bits</div><div class="t" style="left:2.8px;top:34.5px;font-size:7.6px">2.218 kAcqs</div><div class="t" style="left:46px;top:13.2px;font-size:7.6px">Analyze</div></div><div class="a" style="left:1006.5px;top:557.7px;width:48.2px;height:19px;border-radius:3px;background:#12c012"></div><div class="t" style="left:1006.5px;width:48.2px;text-align:center;top:563.5px;font-size:7.4px;font-weight:700;color:#f0fff0">Triggered</div><div class="a" style="left:1006.5px;top:582px;width:48.2px;height:18.5px;border-radius:2px;background:#c9c9c9"></div><div class="t" style="left:1006.5px;width:48.2px;text-align:center;top:582.8px;font-size:7.8px;line-height:9px;color:#4a4a4a">22 Jun 2020<br>6:43:41 PM</div><svg class="a" style="left:990px;top:120px" width="18" height="17"><g fill="#bdbdbd"><rect x="1.5" y="1.5" width="1.6" height="1.6"/><rect x="5.5" y="1.5" width="1.6" height="1.6"/><rect x="9.5" y="1.5" width="1.6" height="1.6"/><rect x="13.5" y="1.5" width="1.6" height="1.6"/><rect x="1.5" y="5.5" width="1.6" height="1.6"/><rect x="13.5" y="5.5" width="1.6" height="1.6"/><rect x="1.5" y="9.5" width="1.6" height="1.6"/><rect x="13.5" y="9.5" width="1.6" height="1.6"/><rect x="1.5" y="13" width="1.6" height="1.6"/><rect x="5.5" y="13" width="1.6" height="1.6"/><rect x="9.5" y="13" width="1.6" height="1.6"/></g><circle cx="9.3" cy="7" r="3" fill="none" stroke="#c8c8c8" stroke-width="1.2"/><path d="M7 9.3 L4 12" stroke="#c8c8c8" stroke-width="1.3"/><path d="M12.5 10.5 L16.5 14 L15 15.5 Z" fill="#e0e0e0"/></svg></body></html>
